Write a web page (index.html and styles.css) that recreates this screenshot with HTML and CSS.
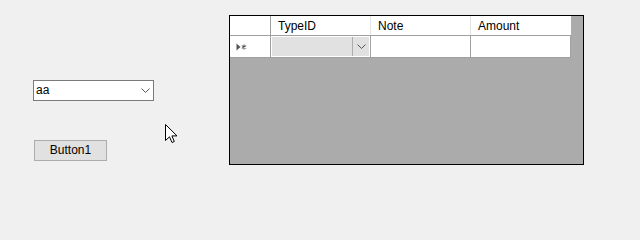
FILE: index.html
```html
<!DOCTYPE html>
<html>
<head>
<meta charset="utf-8">
<link rel="stylesheet" href="styles.css">
</head>
<body>
<div class="form">
  <div class="left">
    <div class="combo">
      <span class="combo-text">aa</span>
      <svg class="chev" width="9" height="5" viewBox="0 0 9 5"><path d="M0.5 0.5 L4.5 4.5 L8.5 0.5" fill="none" stroke="#555" stroke-width="1"/></svg>
    </div>
    <div class="button">Button1</div>
  </div>
  <div class="grid">
    <div class="row head">
      <div class="rh"></div>
      <div class="cell">TypeID</div>
      <div class="cell">Note</div>
      <div class="cell">Amount</div>
    </div>
    <div class="row data">
      <div class="rh">
        <svg width="13" height="8" viewBox="0 0 13 8"><path d="M0.5 0.5 L4.5 4 L0.5 7.5 Z" fill="#555"/><g stroke="#555" stroke-width="1.1" fill="none"><path d="M8 1.5 V6.5 M5.8 2.6 L10.2 5.4 M5.8 5.4 L10.2 2.6"/></g></svg>
      </div>
      <div class="cell combo-cell">
        <div class="cc-field"></div>
        <div class="cc-btn"><svg width="9" height="5" viewBox="0 0 9 5"><path d="M0.5 0.5 L4.5 4.5 L8.5 0.5" fill="none" stroke="#555" stroke-width="1"/></svg></div>
      </div>
      <div class="cell"></div>
      <div class="cell"></div>
    </div>
  </div>
</div>
<svg class="cursor" width="13" height="20" viewBox="0 0 13 20"><path d="M0.5 0.5 L0.5 16.5 L4.5 12.8 L7 18.5 L9.3 17.5 L6.9 11.9 L12 11.9 Z" fill="#fff" stroke="#000" stroke-width="1" stroke-linejoin="miter"/></svg>
</body>
</html>
```

FILE: styles.css
```css
html, body {
  margin: 0;
  padding: 0;
  background: #f0f0f0;
  width: 640px;
  height: 221px;
  overflow: hidden;
  font-family: "Liberation Sans", Arial, sans-serif;
  font-size: 12px;
  color: #000;
}
.form {
  display: flex;
  padding-top: 15px;
}
.left {
  width: 196px;
  padding-left: 33px;
  padding-top: 65px;
  display: flex;
  flex-direction: column;
  align-items: flex-start;
}
.combo {
  box-sizing: border-box;
  width: 121px;
  height: 21px;
  border: 1px solid #7a7a7a;
  background: #fff;
  display: flex;
  align-items: center;
  justify-content: space-between;
  padding: 0 3px 0 2px;
}
.combo-text {
  line-height: 14px;
  margin-top: -1px;
}
.chev {
  display: block;
}
.button {
  box-sizing: border-box;
  margin-top: 39px;
  margin-left: 1px;
  width: 73px;
  height: 21px;
  border: 1px solid #adadad;
  background: #e1e1e1;
  display: flex;
  align-items: center;
  justify-content: center;
  line-height: 14px;
  padding-bottom: 1px;
}
.grid {
  box-sizing: border-box;
  width: 355px;
  height: 150px;
  border: 1px solid #000;
  background: #ababab;
}
.row {
  display: flex;
  width: 341px;
  background: #fff;
}
.head {
  height: 20px;
  box-sizing: border-box;
  border-bottom: 1px solid #a0a0a0;
}
.head .rh {
  box-sizing: border-box;
  width: 41px;
  border-right: 1px solid #a0a0a0;
}
.head .cell {
  box-sizing: border-box;
  width: 100px;
  border-right: 1px solid #e3e3e3;
  padding-left: 7px;
  padding-top: 3px;
  line-height: 15px;
}
.head .cell:last-child {
  border-right: 1px solid #fff;
}
.data {
  height: 22px;
  box-sizing: border-box;
  border-bottom: 1px solid #a0a0a0;
}
.data .rh {
  box-sizing: border-box;
  width: 41px;
  border-right: 1px solid #a0a0a0;
  display: flex;
  align-items: center;
  padding-left: 6px;
  padding-top: 1px;
}
.data .rh svg {
  display: block;
}
.data .cell {
  box-sizing: border-box;
  width: 100px;
  border-right: 1px solid #a0a0a0;
}
.combo-cell {
  display: flex;
  padding: 1px;
  background: #fff;
}
.cc-field {
  flex: 1;
  background: #e1e1e1;
}
.cc-btn {
  box-sizing: border-box;
  width: 17px;
  background: #e1e1e1;
  border-left: 1px solid #adadad;
  display: flex;
  align-items: center;
  justify-content: center;
}
.cc-btn svg {
  display: block;
}
.cursor {
  position: absolute;
  left: 165px;
  top: 124px;
}
```
